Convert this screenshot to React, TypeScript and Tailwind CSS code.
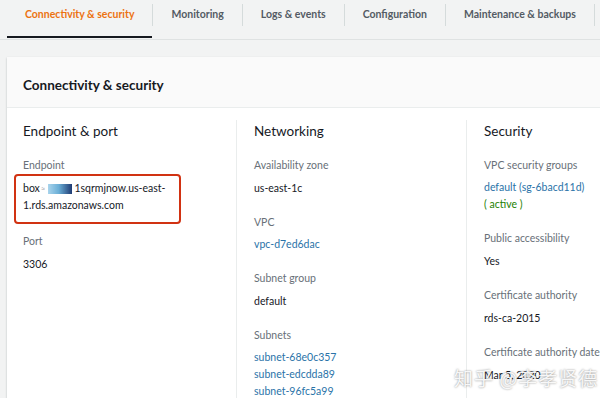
import React from 'react'

const tabs = ['Connectivity & security', 'Monitoring', 'Logs & events', 'Configuration', 'Maintenance & backups']

function Label({ children }: { children: React.ReactNode }) {
  return <div className="text-[10.5px] leading-[18px] text-[#687078] whitespace-nowrap">{children}</div>
}

function Value({ children, className = '' }: { children: React.ReactNode; className?: string }) {
  return <div className={`text-[10.5px] leading-[18px] text-[#16191f] whitespace-nowrap ${className}`}>{children}</div>
}

function Link({ children }: { children: React.ReactNode }) {
  return <div className="text-[10.5px] leading-[17px] text-[#2a73a8] whitespace-nowrap">{children}</div>
}

function Field({ label, children }: { label: string; children: React.ReactNode }) {
  return (
    <div className="mt-[16px]">
      <Label>{label}</Label>
      <div className="mt-[5px]">{children}</div>
    </div>
  )
}

export default function App() {
  return (
    <div className="relative w-[600px] h-[398px] overflow-hidden bg-[#f2f3f3] font-['Lato',sans-serif]">
      {/* tabs */}
      <div className="flex h-[40px] border-b border-[#dfe2e2]">
        {tabs.map((t, i) => (
          <div key={t} className="flex items-stretch shrink-0">
            <div
              className={`relative flex items-start pt-[7px] px-[18px] text-[10.5px] font-bold whitespace-nowrap ${
                i === 0 ? 'text-[#ec7211] ml-[7px]' : 'text-[#545b64]'
              }`}
            >
              {t}
              {i === 0 && <div className="absolute left-0 right-0 bottom-[1px] h-[2px] bg-[#16191f]" />}
            </div>
            <div className="w-px h-[22px] mt-[4px] bg-[#d5dbdb]" />
          </div>
        ))}
      </div>

      {/* card */}
      <div className="ml-[7px] mt-[17px] w-[700px] h-[400px] bg-white shadow-[0_1px_2px_rgba(0,28,36,0.25)]">
        <div className="h-[51px] bg-[#fafafa] border-b border-[#eaeded] flex items-center pt-[6px] px-[16px]">
          <h2 className="text-[13.5px] font-bold text-[#16191f]">Connectivity &amp; security</h2>
        </div>
        <div className="grid grid-cols-[229px_230px_230px] mt-[12px] pb-[20px]">
          {/* Endpoint & port */}
          <div className="px-[16px]">
            <h3 className="text-[13.5px] text-[#16191f] leading-[20px] pt-[1px]">Endpoint &amp; port</h3>
            <div className="mt-[15px]">
              <Label>Endpoint</Label>
              <div className="-mx-[9px] w-[167px] rounded-[4px] border-2 border-[#d13212] pl-[7px] pt-[4px] pb-[8px]">
                <div className="flex items-center text-[10.5px] leading-[17px] text-[#16191f] whitespace-nowrap">
                  box
                  <span className="ml-[1px] text-[8px] text-[#9aa0a6]">≈</span>
                  <span className="inline-block ml-[3px] w-[24px] h-[10px] bg-[linear-gradient(90deg,#a9d4ec_0%,#6aaed6_45%,#1f3b73_100%)] blur-[0.6px]" />
                  <span className="ml-[2px]">1sqrmjnow.us-east-</span>
                </div>
                <div className="text-[10.5px] leading-[17px] text-[#16191f] whitespace-nowrap">1.rds.amazonaws.com</div>
              </div>
            </div>
            <div className="mt-[8px]">
              <Label>Port</Label>
              <Value className="mt-[5px]">3306</Value>
            </div>
          </div>

          {/* Networking */}
          <div className="px-[17px] border-l border-[#eaeded]">
            <h3 className="text-[13.5px] text-[#16191f] leading-[20px] pt-[1px] -mb-[1px]">Networking</h3>
            <Field label="Availability zone">
              <Value>us-east-1c</Value>
            </Field>
            <Field label="VPC">
              <Link>vpc-d7ed6dac</Link>
            </Field>
            <Field label="Subnet group">
              <Value>default</Value>
            </Field>
            <Field label="Subnets">
              <Link>subnet-68e0c357</Link>
              <Link>subnet-edcdda89</Link>
              <Link>subnet-96fc5a99</Link>
            </Field>
          </div>

          {/* Security */}
          <div className="px-[17px] border-l border-[#eaeded]">
            <h3 className="text-[13.5px] text-[#16191f] leading-[20px] pt-[1px] -mb-[1px]">Security</h3>
            <Field label="VPC security groups">
              <Link>default (sg-6bacd11d)</Link>
              <div className="text-[10.5px] leading-[17px] text-[#1d8102]">( active )</div>
            </Field>
            <Field label="Public accessibility">
              <Value>Yes</Value>
            </Field>
            <Field label="Certificate authority">
              <Value>rds-ca-2015</Value>
            </Field>
            <Field label="Certificate authority date">
              <Value>Mar 5, 2020</Value>
            </Field>
          </div>
        </div>
      </div>

      {/* watermark */}
      <div className="absolute left-[454px] top-[364px] text-[19px] text-white/90 font-['Noto_Sans_CJK_SC',sans-serif] [text-shadow:0_0_2px_rgba(0,0,0,0.5)] tracking-[1px] whitespace-nowrap">
        知乎 @李孝贤德
      </div>
    </div>
  )
}
